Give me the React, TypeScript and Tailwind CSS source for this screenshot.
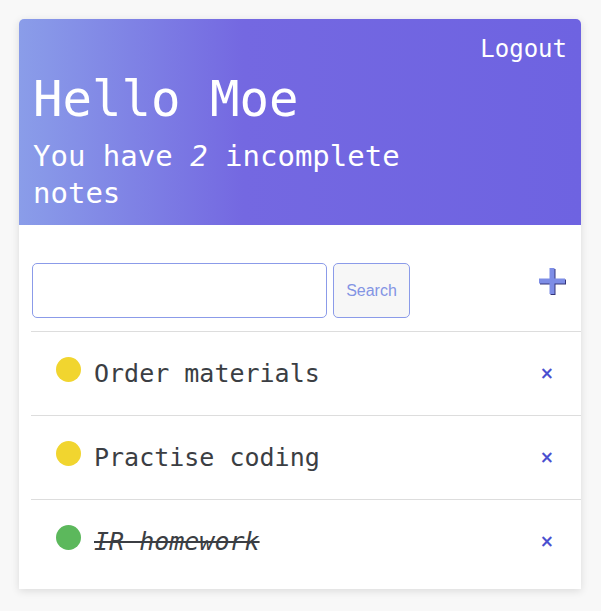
import React, { useState } from 'react';

interface Note {
  id: number;
  title: string;
  done: boolean;
}

const initialNotes: Note[] = [
  { id: 1, title: 'Order materials', done: false },
  { id: 2, title: 'Practise coding', done: false },
  { id: 3, title: 'IR homework', done: true },
];

const PlusIcon = () => (
  <svg width="28" height="28" viewBox="0 0 28 28" className="drop-shadow-[1.5px_1.5px_0_#34347a]">
    <rect x="0" y="10.5" width="26" height="5" fill="#7d8de6" />
    <rect x="10.5" y="0" width="5" height="26" fill="#7d8de6" />
  </svg>
);

const App: React.FC = () => {
  const [notes, setNotes] = useState<Note[]>(initialNotes);
  const [query, setQuery] = useState('');

  const incomplete = notes.filter((n) => !n.done).length;

  return (
    <div className="min-h-screen bg-[#f8f8f8] pt-[19px] pb-4 font-['DejaVu_Sans_Mono',monospace]">
      <div className="ml-[19px] w-[562px] bg-white rounded-t-[5px] shadow-[0_2px_8px_rgba(0,0,0,0.12)]">
        {/* Header */}
        <div className="rounded-t-[5px] bg-[linear-gradient(90deg,#8a9de9_0%,#7468e1_40%,#6e63e1_100%)] px-[14px] pt-[13px] pb-[13px] text-white">
          <div className="flex justify-end">
            <button className="text-[24px] leading-[34px] text-white">Logout</button>
          </div>
          <h1 className="mt-[4px] text-[49px] leading-[60px]">Hello Moe</h1>
          <p className="mt-[8px] max-w-[390px] text-[29px] leading-[37px]">
            You have <em>{incomplete}</em> incomplete notes
          </p>
        </div>

        {/* Search bar */}
        <div className="flex items-start justify-between pl-[13px] pr-[14px] pt-[38px] pb-[13px]">
          <div className="flex gap-[6px]">
            <input
              value={query}
              onChange={(e) => setQuery(e.target.value)}
              className="h-[55px] w-[295px] rounded-[5px] border border-[#8b9be9] bg-white px-2 outline-none"
            />
            <button className="h-[55px] w-[77px] rounded-[5px] border border-[#8b9be9] bg-[#f7f7f7] font-['Liberation_Sans',Arial,sans-serif] text-[16px] text-[#8394e4]">
              Search
            </button>
          </div>
          <div className="mt-[5px]">
            <PlusIcon />
          </div>
        </div>

        {/* Notes */}
        <ul className="ml-3 pb-[6px]">
          {notes.map((note) => (
            <li key={note.id} className="flex h-[84px] items-center border-t border-[#dddddd] pl-[25px] pr-[27px]">
              <span
                className={`mb-[8px] h-[25px] w-[25px] shrink-0 rounded-full ${note.done ? 'bg-[#5cb85c]' : 'bg-[#f1d52f]'}`}
              />
              <span
                className={`ml-[13px] flex-1 text-[25px] text-[#3b3e43] ${note.done ? 'italic line-through' : ''}`}
              >
                {note.title}
              </span>
              <button
                onClick={() => setNotes(notes.filter((n) => n.id !== note.id))}
                className="font-['DejaVu_Sans',sans-serif] text-[17px] font-bold leading-none text-[#4a50d0]"
              >
                ×
              </button>
            </li>
          ))}
        </ul>
      </div>
    </div>
  );
};

export default App;
